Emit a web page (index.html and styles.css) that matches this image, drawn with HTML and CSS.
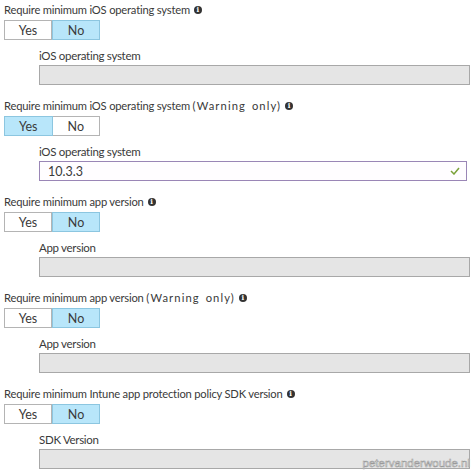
FILE: index.html
```html
<!DOCTYPE html>
<html>
<head>
<meta charset="utf-8">
<link rel="stylesheet" href="styles.css">
</head>
<body>
<div class="page">
  <div class="setting">
    <div class="title"><span>Require minimum iOS operating system</span><span class="info">i</span></div>
    <div class="toggle"><span class="opt">Yes</span><span class="opt on">No</span></div>
    <div class="field">
      <div class="label">iOS operating system</div>
      <div class="input disabled"></div>
    </div>
  </div>
  <div class="setting">
    <div class="title"><span>Require minimum iOS operating system <span class="qual">(Warning only)</span></span><span class="info">i</span></div>
    <div class="toggle"><span class="opt on">Yes</span><span class="opt">No</span></div>
    <div class="field">
      <div class="label">iOS operating system</div>
      <div class="input active"><span class="value">10.3.3</span>
        <svg class="check" width="10" height="8" viewBox="0 0 10 8"><path d="M1 4 L4 7 L9 1" fill="none" stroke="#7ba23a" stroke-width="1.5"/></svg>
      </div>
    </div>
  </div>
  <div class="setting">
    <div class="title"><span>Require minimum app version</span><span class="info">i</span></div>
    <div class="toggle"><span class="opt">Yes</span><span class="opt on">No</span></div>
    <div class="field">
      <div class="label">App version</div>
      <div class="input disabled"></div>
    </div>
  </div>
  <div class="setting">
    <div class="title"><span>Require minimum app version <span class="qual">(Warning only)</span></span><span class="info">i</span></div>
    <div class="toggle"><span class="opt">Yes</span><span class="opt on">No</span></div>
    <div class="field">
      <div class="label">App version</div>
      <div class="input disabled"></div>
    </div>
  </div>
  <div class="setting">
    <div class="title"><span>Require minimum Intune app protection policy SDK version</span><span class="info">i</span></div>
    <div class="toggle"><span class="opt">Yes</span><span class="opt on">No</span></div>
    <div class="field">
      <div class="label">SDK Version</div>
      <div class="input disabled"></div>
    </div>
  </div>
  <div class="watermark">petervanderwoude.nl</div>
</div>
</body>
</html>
```
FILE: styles.css
```css
html, body {
  margin: 0;
  padding: 0;
  background: #ffffff;
}
.page {
  position: relative;
  width: 474px;
  height: 472px;
  padding: 2px 4px 0 4px;
  box-sizing: border-box;
  font-family: Lato, "Open Sans", sans-serif;
  font-size: 11px;
  letter-spacing: -0.15px;
  color: #3a3a3a;
  overflow: hidden;
}
.setting {
  display: flex;
  flex-direction: column;
  height: 96px;
}
.title {
  height: 16px;
  line-height: 16px;
  margin-bottom: 2px;
  display: flex;
  align-items: center;
  gap: 4px;
  white-space: nowrap;
  font-size: 11.2px;
  letter-spacing: -0.2px;
}
.qual {
  letter-spacing: 1.1px;
  word-spacing: 2px;
}
.info {
  display: inline-flex;
  align-items: center;
  justify-content: center;
  width: 8px;
  height: 8px;
  border-radius: 50%;
  background: #333333;
  color: #ffffff;
  font-size: 7px;
  font-weight: bold;
  line-height: 8px;
  letter-spacing: 0;
  font-family: "DejaVu Serif", serif;
}
.toggle {
  display: flex;
  width: 96px;
  height: 20px;
}
.opt {
  flex: 1;
  height: 20px;
  box-sizing: border-box;
  border: 1px solid #b4b4b4;
  background: #ffffff;
  display: flex;
  align-items: center;
  justify-content: center;
  font-size: 12.5px;
  letter-spacing: 0;
}
.opt + .opt {
  border-left: none;
}
.opt.on {
  background: #b8e6fa;
  border-color: #8cc6e0;
}
.toggle .opt.on:last-child {
  border-left: 1px solid #8cc6e0;
}
.field {
  margin-left: 35px;
  margin-top: 8px;
}
.label {
  height: 16px;
  line-height: 16px;
  margin-bottom: 1px;
  font-size: 11.5px;
  letter-spacing: -0.3px;
}
.input {
  height: 20px;
  width: 431px;
  box-sizing: border-box;
  display: flex;
  align-items: center;
  justify-content: space-between;
  padding: 0 6px 0 8px;
}
.input.disabled {
  background: #e5e5e5;
  border: 1px solid #a8a8a8;
}
.input.active {
  width: 428px;
  background: #fffdff;
  border: 1px solid #9a86b6;
}
.value {
  font-size: 12.5px;
  letter-spacing: 0;
}
.check {
  display: block;
}
.watermark {
  position: absolute;
  right: 4px;
  bottom: 3px;
  font-family: "Liberation Sans", sans-serif;
  font-size: 11.5px;
  letter-spacing: 0;
  color: #ffffff;
  -webkit-text-stroke: 0.6px #9a9a9a;
}
```
